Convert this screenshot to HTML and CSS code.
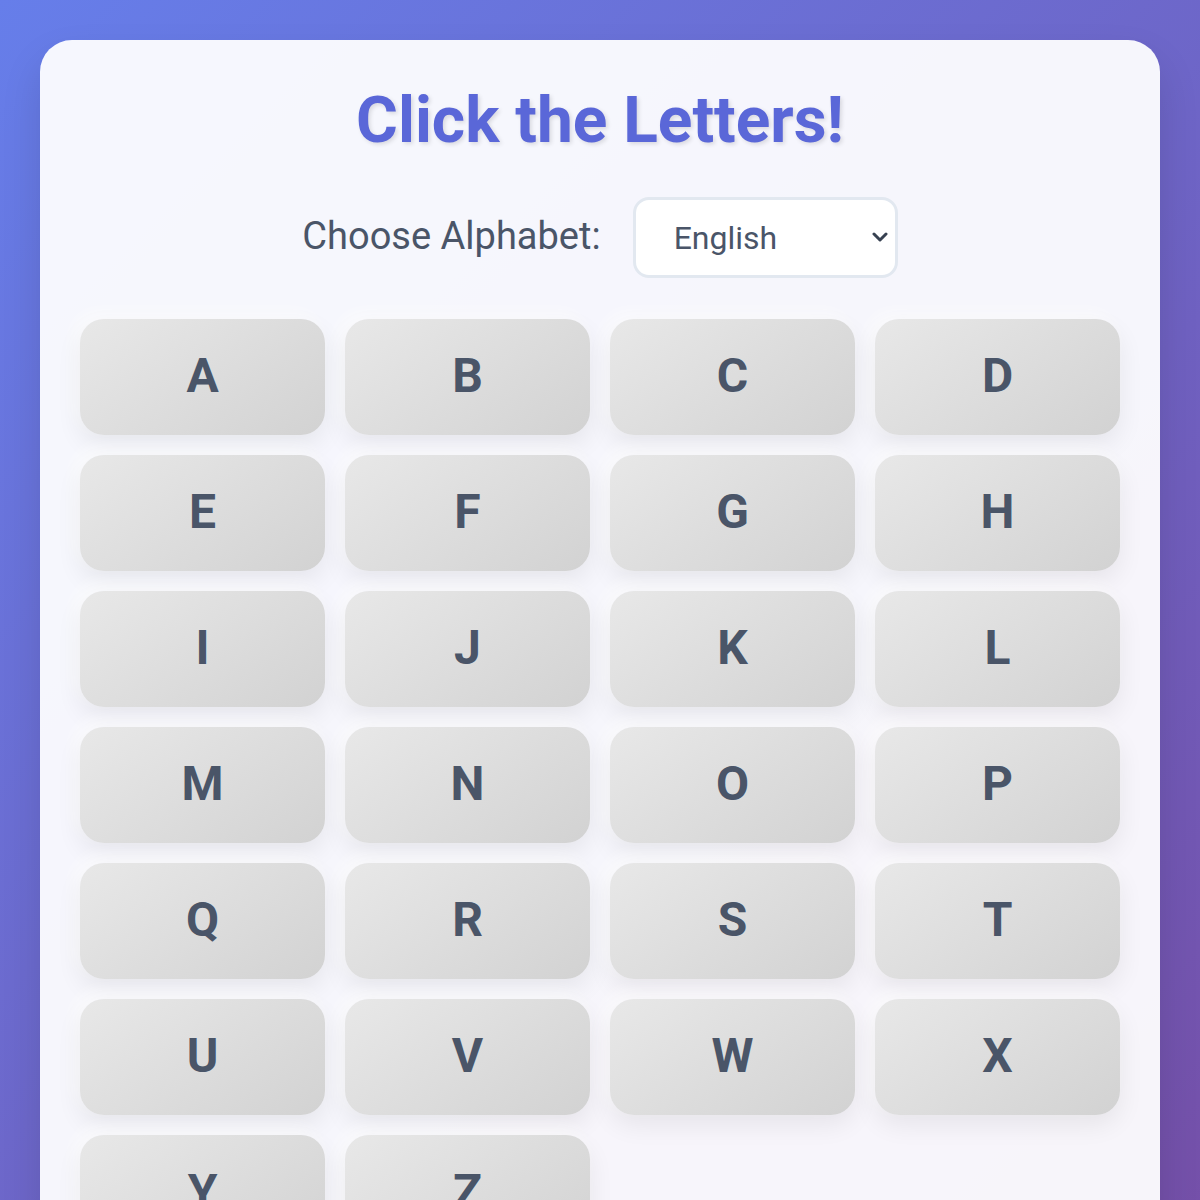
FILE: index.html
```html
<!DOCTYPE html>
<html lang="en">
<head>
<meta charset="utf-8">
<title>Click the Letters!</title>
<link rel="stylesheet" href="styles.css">
</head>
<body>
<main class="card">
  <h1 class="title">Click the Letters!</h1>
  <div class="chooser">
    <label class="chooser-label" for="alphabet">Choose Alphabet:</label>
    <div class="select-wrap">
      <select id="alphabet" class="select">
        <option>English</option>
        <option>Spanish</option>
        <option>French</option>
      </select>
      <svg class="chevron" viewBox="0 0 16 10" width="16" height="10" aria-hidden="true"><path d="M2 2 L8 8 L14 2" fill="none" stroke="#374151" stroke-width="3" stroke-linecap="round" stroke-linejoin="round"/></svg>
    </div>
  </div>
  <div class="grid">
    <button class="key">A</button><button class="key">B</button><button class="key">C</button><button class="key">D</button>
    <button class="key">E</button><button class="key">F</button><button class="key">G</button><button class="key">H</button>
    <button class="key">I</button><button class="key">J</button><button class="key">K</button><button class="key">L</button>
    <button class="key">M</button><button class="key">N</button><button class="key">O</button><button class="key">P</button>
    <button class="key">Q</button><button class="key">R</button><button class="key">S</button><button class="key">T</button>
    <button class="key">U</button><button class="key">V</button><button class="key">W</button><button class="key">X</button>
    <button class="key">Y</button><button class="key">Z</button>
  </div>
</main>
</body>
</html>
```
FILE: styles.css
```css
html, body {
  margin: 0;
  padding: 0;
}
body {
  min-height: 1200px;
  background: linear-gradient(135deg, #667eea 0%, #764ba2 100%);
  font-family: Roboto, "Noto Sans", "Liberation Sans", sans-serif;
  padding: 40px;
  box-sizing: border-box;
}
.card {
  background: rgba(255, 255, 255, 0.94);
  border-radius: 32px;
  padding: 43px 40px 40px;
  min-height: 1300px;
  box-shadow: 0 20px 40px rgba(0, 0, 0, 0.12);
}
.title {
  margin: 0;
  text-align: center;
  color: #5a67d8;
  font-size: 64px;
  font-weight: 700;
  line-height: 75px;
  text-shadow: 2px 2px 4px rgba(0, 0, 0, 0.12);
}
.chooser {
  display: flex;
  justify-content: center;
  align-items: center;
  gap: 32px;
  margin-top: 39px;
}
.chooser-label {
  font-size: 38px;
  color: #4a5568;
  margin-top: -4px;
}
.select-wrap {
  position: relative;
}
.select {
  appearance: none;
  -webkit-appearance: none;
  width: 265px;
  height: 81px;
  box-sizing: border-box;
  border: 3px solid #e2e8f0;
  border-radius: 16px;
  background: #ffffff;
  font-family: Roboto, "Noto Sans", sans-serif;
  font-size: 32px;
  color: #4a5568;
  padding: 0 0 0 38px;
  display: block;
}
.chevron {
  position: absolute;
  right: 10px;
  top: 35px;
  pointer-events: none;
}
.grid {
  display: grid;
  grid-template-columns: repeat(4, 1fr);
  gap: 20px;
  margin-top: 41px;
}
.key {
  height: 116px;
  border: none;
  border-radius: 24px;
  background: linear-gradient(145deg, #e8e8e8, #d2d2d2);
  box-shadow: 0 10px 26px rgba(0, 0, 0, 0.07), -6px -6px 16px rgba(255, 255, 255, 0.7);
  font-family: Roboto, "Noto Sans", sans-serif;
  font-size: 48px;
  font-weight: 700;
  color: #4a5568;
  cursor: pointer;
  padding: 0 0 4px;
}
```
